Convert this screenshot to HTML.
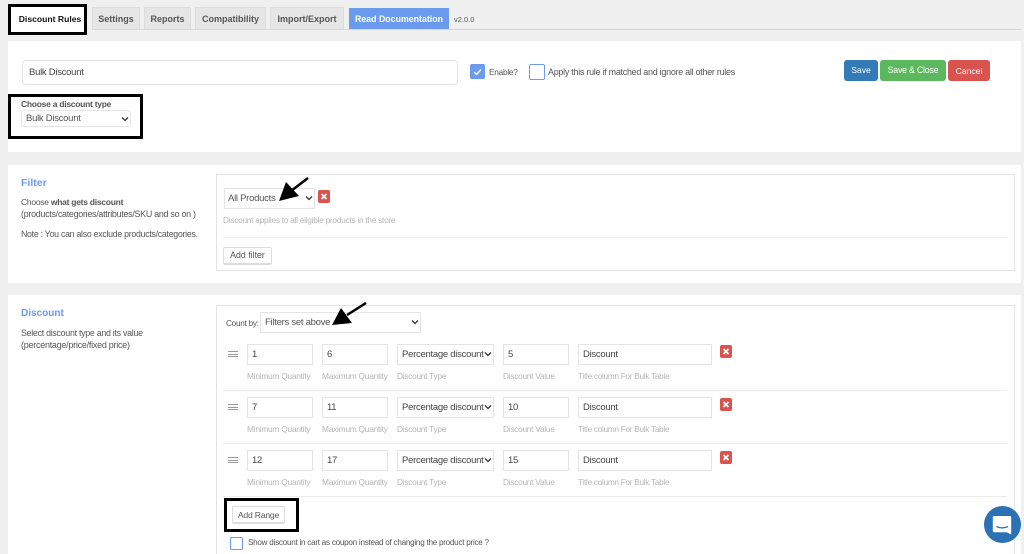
<!DOCTYPE html>
<html><head><meta charset="utf-8"><style>
html,body{margin:0;padding:0;width:1024px;height:554px;overflow:hidden;background:#f0f0f0;font-family:"Liberation Sans",sans-serif}
#r{position:relative;width:1024px;height:554px;overflow:hidden;filter:blur(.35px)}
#r div{position:absolute;box-sizing:border-box}
.p{background:#fff;left:8px;width:1013px}
.t{white-space:nowrap;line-height:12px;height:12px;color:#555;font-size:8.8px;letter-spacing:-.26px}
.tab{background:#e6e6e6;border:1px solid #dcdcdc;border-bottom:0;top:7px;height:22px;text-align:center;font-size:9px;font-weight:bold;color:#555;line-height:22px}
.i{background:#fff;border:1px solid #e4e4e4;font-size:9.5px;letter-spacing:-.27px;color:#444;line-height:20px;padding-left:4px;white-space:nowrap}
.lab{color:#b5b5b5;font-size:8.3px}
.btn{color:#fff;font-size:8.6px;text-align:center;line-height:21px;border-radius:3px}
.x{background:#d9534f;border-radius:2px;width:12px;height:13px}
.x svg{display:block}
.sb{background:#fff;border:1px solid #ddd;border-bottom-width:2px;border-radius:2px;font-size:9px;color:#555;text-align:center}
.hr{background:#ececec;height:1px;left:223px;width:784px}
.dr{left:228px;width:10px;height:6px;border-top:1px solid #999;border-bottom:1px solid #999}
.dr:after{content:"";position:absolute;left:0;right:0;top:1.5px;height:1px;background:#999}
.blk{border:3px solid #000}
svg.ch{position:absolute}
</style></head><body><div id="r">

<div class="hr" style="left:92px;width:929px;top:29px;height:1px;background:#d8d8d8"></div>
<div class="blk" style="left:8px;top:4px;width:79px;height:31px;background:#fff;text-align:center;font-size:8.6px;font-weight:bold;color:#111;line-height:25px;padding-left:5px">Discount Rules</div>
<div class="tab" style="left:92px;width:48px">Settings</div>
<div class="tab" style="left:144px;width:47px">Reports</div>
<div class="tab" style="left:195px;width:71px">Compatibility</div>
<div class="tab" style="left:270px;width:74px">Import/Export</div>
<div class="tab" style="left:349px;width:100px;background:#6a9bee;border-color:#6a9bee;top:8px;height:21px;color:#fff;line-height:20px;font-size:8.8px">Read Documentation</div>
<div class="t" style="left:454px;top:14px;font-size:7.5px;letter-spacing:0">v2.0.0</div>

<div class="p" style="top:41px;height:111px"></div>
<div class="i" style="left:22px;top:60px;width:436px;height:25px;border-radius:4px;line-height:24px;padding-left:6px">Bulk Discount</div>
<div style="left:470px;top:64px;width:15px;height:15px;background:#6a9bee;border-radius:2px"><svg width="15" height="15" style="display:block"><path d="M4 8l2.500 2.500L11 5.500" fill="none" stroke="#fff" stroke-width="1.400"/></svg></div>
<div class="t" style="left:489px;top:66px;font-size:8.3px">Enable?</div>
<div style="left:529px;top:64px;width:16px;height:16px;border:1.500px solid #6a9bee;border-radius:2px;background:#fff"></div>
<div class="t" style="left:548px;top:66px;font-size:8.95px">Apply this rule if matched and ignore all other rules</div>
<div class="btn" style="left:844px;top:60px;width:34px;height:21px;background:#337ab7">Save</div>
<div class="btn" style="left:880px;top:60px;width:66px;height:21px;background:#5cb85c;font-size:8.8px;letter-spacing:-.22px">Save &amp; Close</div>
<div class="btn" style="left:948px;top:60px;width:42px;height:21px;background:#d9534f;line-height:22px">Cancel</div>

<div class="blk" style="left:8px;top:94px;width:135px;height:45px;background:#fff"></div>
<div class="t" style="left:21px;top:98px;font-weight:bold;font-size:8.5px">Choose a discount type</div>
<div class="i" style="left:21px;top:110px;width:110px;height:17px;border-radius:3px;line-height:16px;padding-left:4px;color:#555">Bulk Discount</div>
<svg class="ch" style="left:121px;top:116px" width="8" height="6"><path d="M1 1.500l3 3 3-3" fill="none" stroke="#333" stroke-width="1.300"/></svg>

<div class="p" style="top:165px;height:118px"></div>
<div class="t" style="left:21px;top:177px;color:#6a9bee;font-weight:bold;font-size:10.5px;line-height:13px;letter-spacing:0">Filter</div>
<div class="t" style="left:21px;top:196px;font-size:8.5px">Choose <b>what gets discount</b></div>
<div class="t" style="left:21px;top:208px;font-size:8.9px">(products/categories/attributes/SKU and so on )</div>
<div class="t" style="left:21px;top:228px;font-size:8.75px">Note : You can also exclude products/categories.</div>
<div style="left:216px;top:174px;width:799px;height:97px;border:1px solid #e4e4e4"></div>
<div class="i" style="left:224px;top:188px;width:91px;height:21px;padding-left:3px;color:#555">All Products</div>
<svg class="ch" style="left:305px;top:195px" width="8" height="6"><path d="M1 1.500l3 3 3-3" fill="none" stroke="#333" stroke-width="1.300"/></svg>
<div class="x" style="left:318px;top:190px"><svg width="12" height="13"><path d="M3.500 4l5 5m0-5l-5 5" stroke="#fff" stroke-width="1.800"/></svg></div>
<div class="t lab" style="left:223px;top:214px">Discount applies to all eligible products in the store</div>
<div class="hr" style="top:237px"></div>
<div class="sb" style="left:223px;top:247px;width:49px;height:18px;line-height:15px;font-size:8.8px">Add filter</div>

<div class="p" style="top:295px;height:259px"></div>
<div class="t" style="left:21px;top:307px;color:#6a9bee;font-weight:bold;font-size:10px;line-height:13px;letter-spacing:0">Discount</div>
<div class="t" style="left:21px;top:327px">Select discount type and its value</div>
<div class="t" style="left:21px;top:339px;font-size:9px">(percentage/price/fixed price)</div>
<div style="left:216px;top:305px;width:799px;height:260px;border:1px solid #e4e4e4"></div>
<div class="t" style="left:226px;top:317px;font-size:8.2px;line-height:13px">Count by:</div>
<div class="i" style="left:260px;top:312px;width:161px;height:21px;padding-left:4px;color:#555">Filters set above</div>
<svg class="ch" style="left:411px;top:319px" width="8" height="6"><path d="M1 1.500l3 3 3-3" fill="none" stroke="#333" stroke-width="1.300"/></svg>

<!-- row 1 -->
<div class="dr" style="top:351px"></div>
<div class="i" style="left:247px;top:344px;width:66px;height:21px">1</div>
<div class="i" style="left:322px;top:344px;width:66px;height:21px">6</div>
<div class="i" style="left:397px;top:344px;width:97px;height:21px">Percentage discount</div>
<svg class="ch" style="left:484px;top:351px" width="8" height="6"><path d="M1 1.500l3 3 3-3" fill="none" stroke="#333" stroke-width="1.300"/></svg>
<div class="i" style="left:503px;top:344px;width:66px;height:21px">5</div>
<div class="i" style="left:578px;top:344px;width:134px;height:21px">Discount</div>
<div class="x" style="left:720px;top:345px"><svg width="12" height="13"><path d="M3.500 4l5 5m0-5l-5 5" stroke="#fff" stroke-width="1.800"/></svg></div>
<div class="t lab" style="left:247px;top:370px;font-size:8.4px;line-height:13px">Minimum Quantity</div>
<div class="t lab" style="left:322px;top:370px;font-size:8.4px;line-height:13px">Maximum Quantity</div>
<div class="t lab" style="left:397px;top:370px;line-height:13px">Discount Type</div>
<div class="t lab" style="left:503px;top:370px;line-height:13px">Discount Value</div>
<div class="t lab" style="left:578px;top:370px;font-size:8.2px;line-height:13px">Title column For Bulk Table</div>
<div class="hr" style="top:390px"></div>

<!-- row 2 -->
<div class="dr" style="top:404px"></div>
<div class="i" style="left:247px;top:397px;width:66px;height:21px">7</div>
<div class="i" style="left:322px;top:397px;width:66px;height:21px">11</div>
<div class="i" style="left:397px;top:397px;width:97px;height:21px">Percentage discount</div>
<svg class="ch" style="left:484px;top:404px" width="8" height="6"><path d="M1 1.500l3 3 3-3" fill="none" stroke="#333" stroke-width="1.300"/></svg>
<div class="i" style="left:503px;top:397px;width:66px;height:21px">10</div>
<div class="i" style="left:578px;top:397px;width:134px;height:21px">Discount</div>
<div class="x" style="left:720px;top:398px"><svg width="12" height="13"><path d="M3.500 4l5 5m0-5l-5 5" stroke="#fff" stroke-width="1.800"/></svg></div>
<div class="t lab" style="left:247px;top:423px;font-size:8.4px;line-height:13px">Minimum Quantity</div>
<div class="t lab" style="left:322px;top:423px;font-size:8.4px;line-height:13px">Maximum Quantity</div>
<div class="t lab" style="left:397px;top:423px;line-height:13px">Discount Type</div>
<div class="t lab" style="left:503px;top:423px;line-height:13px">Discount Value</div>
<div class="t lab" style="left:578px;top:423px;font-size:8.2px;line-height:13px">Title column For Bulk Table</div>
<div class="hr" style="top:443px"></div>

<!-- row 3 -->
<div class="dr" style="top:457px"></div>
<div class="i" style="left:247px;top:450px;width:66px;height:21px">12</div>
<div class="i" style="left:322px;top:450px;width:66px;height:21px">17</div>
<div class="i" style="left:397px;top:450px;width:97px;height:21px">Percentage discount</div>
<svg class="ch" style="left:484px;top:457px" width="8" height="6"><path d="M1 1.500l3 3 3-3" fill="none" stroke="#333" stroke-width="1.300"/></svg>
<div class="i" style="left:503px;top:450px;width:66px;height:21px">15</div>
<div class="i" style="left:578px;top:450px;width:134px;height:21px">Discount</div>
<div class="x" style="left:720px;top:451px"><svg width="12" height="13"><path d="M3.500 4l5 5m0-5l-5 5" stroke="#fff" stroke-width="1.800"/></svg></div>
<div class="t lab" style="left:247px;top:476px;font-size:8.4px;line-height:13px">Minimum Quantity</div>
<div class="t lab" style="left:322px;top:476px;font-size:8.4px;line-height:13px">Maximum Quantity</div>
<div class="t lab" style="left:397px;top:476px;line-height:13px">Discount Type</div>
<div class="t lab" style="left:503px;top:476px;line-height:13px">Discount Value</div>
<div class="t lab" style="left:578px;top:476px;font-size:8.2px;line-height:13px">Title column For Bulk Table</div>
<div class="hr" style="top:496px"></div>

<div class="blk" style="left:224px;top:498px;width:75px;height:34px;background:#fff"></div>
<div class="sb" style="left:232px;top:506px;width:53px;height:18px;line-height:16px;font-size:8.6px;letter-spacing:-.2px">Add Range</div>
<div style="left:230px;top:537px;width:13px;height:13px;border:1.500px solid #6a9bee;border-radius:2px;background:#fff"></div>
<div class="t" style="left:248px;top:537px;font-size:8.15px">Show discount in cart as coupon instead of changing the product price ?</div>

<!-- arrows -->
<svg class="ch" style="left:0;top:0" width="1024" height="554">
<path d="M308 178L291 191" stroke="#000" stroke-width="2.500"/>
<path d="M279 201L286 182L299 196Z" fill="#000"/>
<path d="M366 303L347 315" stroke="#000" stroke-width="2.500"/>
<path d="M332 325L341 308L352 323Z" fill="#000"/>
</svg>

<!-- chat -->
<div style="left:984px;top:506px;width:37px;height:37px;border-radius:50%;background:#2a72b5"></div>
<svg class="ch" style="left:984px;top:506px" width="37" height="37">
<path d="M10 10h16a1.200 1.200 0 0 1 1.200 1.200v17.300l-4.500-2.300h-12.700a1.200 1.200 0 0 1-1.200-1.200v-13.800a1.200 1.200 0 0 1 1.200-1.200z" fill="#fff"/>
<path d="M12.500 20.500q5.500 2.800 11.500 0" fill="none" stroke="#2a72b5" stroke-width="1.400"/>
</svg>
</div></body></html>
